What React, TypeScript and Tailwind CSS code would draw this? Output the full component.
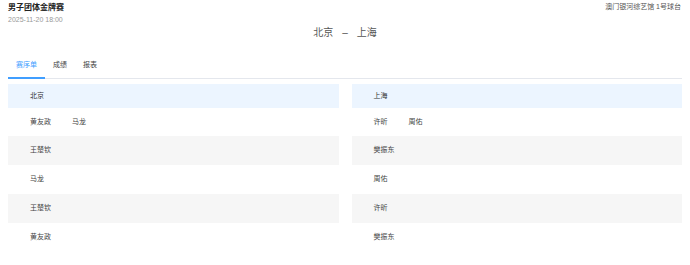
import React from "react";

const left = {
  team: "北京",
  rows: [["黄友政", "马龙"], ["王楚钦"], ["马龙"], ["王楚钦"], ["黄友政"]],
};
const right = {
  team: "上海",
  rows: [["许昕", "周佑"], ["樊振东"], ["周佑"], ["许昕"], ["樊振东"]],
};

const rowH = ["h-[28px]", "h-[28.5px]", "h-[29px]", "h-[29px]", "h-[28.5px]"];

function Panel({ data }: { data: { team: string; rows: string[][] } }) {
  return (
    <div className="flex flex-col">
      <div className="h-[24px] bg-[#ecf5ff] flex items-center pl-[22px] text-[7px] text-[#333]">
        {data.team}
      </div>
      {data.rows.map((r, i) => (
        <div
          key={i}
          className={`${rowH[i]} flex items-center gap-[21px] pl-[22px] text-[7px] text-[#444] ${
            i % 2 === 1 ? "bg-[#f6f6f6]" : "bg-white"
          }`}
        >
          {r.map((n, j) => (
            <span key={j}>{n}</span>
          ))}
        </div>
      ))}
    </div>
  );
}

export default function App() {
  return (
    <div
      className="w-[690px] h-[265px] bg-white px-2 overflow-hidden"
      style={{ fontFamily: '"Liberation Sans", "Noto Sans CJK SC", sans-serif' }}
    >
      <div className="h-[26px] flex justify-between items-start">
        <div className="flex flex-col">
          <div className="text-[8px] leading-[11px] mt-[2px] font-bold text-[#222]">男子团体金牌赛</div>
          <div className="text-[7px] leading-[10px] mt-[2px] text-[#999]">2025-11-20 18:00</div>
        </div>
        <div className="text-[7px] leading-[10px] mt-[2px] text-[#555] mr-[1px]">澳门银河综艺馆 1号球台</div>
      </div>
      <div className="h-[14px] flex items-center justify-center text-[10px] leading-[14px] text-[#555]">
        <span>北京</span>
        <span className="mx-[9px]">–</span>
        <span>上海</span>
      </div>
      <div className="mt-[12px] h-[27px] flex border-b border-[#e4e7ed]">
        <div className="relative px-2 flex items-center text-[7px] text-[#409eff]">
          赛序单
          <span className="absolute left-0 right-0 bottom-[-1px] h-[2px] bg-[#409eff]" />
        </div>
        <div className="px-2 flex items-center text-[7px] text-[#444]">成绩</div>
        <div className="px-2 flex items-center text-[7px] text-[#444]">报表</div>
      </div>
      <div className="mt-[5px] grid grid-cols-2 gap-x-[13px]">
        <Panel data={left} />
        <Panel data={right} />
      </div>
    </div>
  );
}
